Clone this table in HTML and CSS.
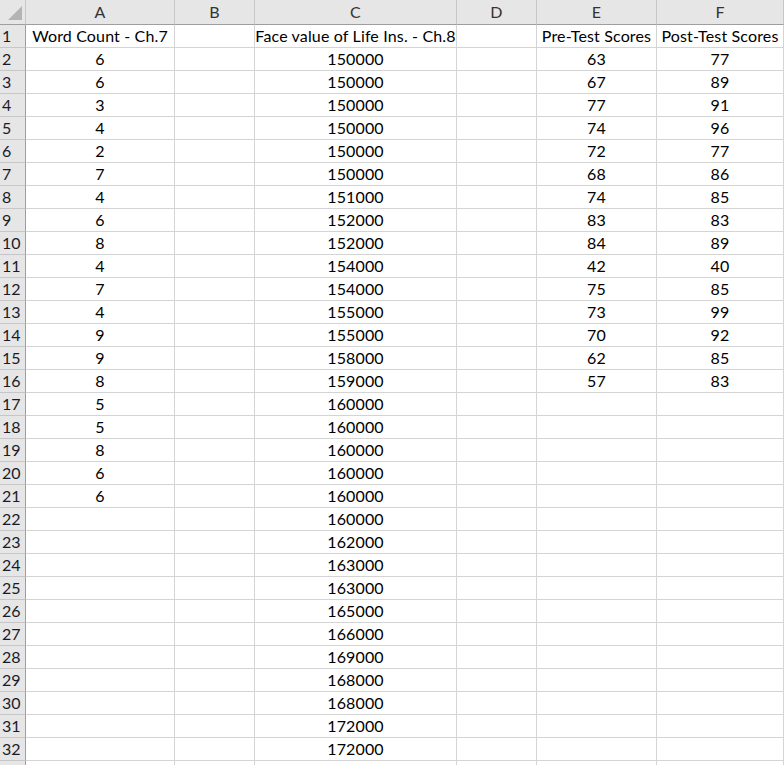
FILE: index.html
```html
<!DOCTYPE html>
<html>
<head>
<meta charset="utf-8">
<link rel="stylesheet" href="styles.css">
</head>
<body>
<div class="sheet">
  <div class="row hdr">
    <div class="c rh corner"><span class="tri"></span></div>
    <div class="c a">A</div><div class="c b">B</div><div class="c cc">C</div><div class="c d">D</div><div class="c e">E</div><div class="c f">F</div>
  </div>
  <div class="row"><div class="c rh">1</div><div class="c a">Word Count - Ch.7</div><div class="c b"></div><div class="c cc">Face value of Life Ins. - Ch.8</div><div class="c d"></div><div class="c e">Pre-Test Scores</div><div class="c f">Post-Test Scores</div></div>
  <div class="row"><div class="c rh">2</div><div class="c a">6</div><div class="c b"></div><div class="c cc">150000</div><div class="c d"></div><div class="c e">63</div><div class="c f">77</div></div>
  <div class="row"><div class="c rh">3</div><div class="c a">6</div><div class="c b"></div><div class="c cc">150000</div><div class="c d"></div><div class="c e">67</div><div class="c f">89</div></div>
  <div class="row"><div class="c rh">4</div><div class="c a">3</div><div class="c b"></div><div class="c cc">150000</div><div class="c d"></div><div class="c e">77</div><div class="c f">91</div></div>
  <div class="row"><div class="c rh">5</div><div class="c a">4</div><div class="c b"></div><div class="c cc">150000</div><div class="c d"></div><div class="c e">74</div><div class="c f">96</div></div>
  <div class="row"><div class="c rh">6</div><div class="c a">2</div><div class="c b"></div><div class="c cc">150000</div><div class="c d"></div><div class="c e">72</div><div class="c f">77</div></div>
  <div class="row"><div class="c rh">7</div><div class="c a">7</div><div class="c b"></div><div class="c cc">150000</div><div class="c d"></div><div class="c e">68</div><div class="c f">86</div></div>
  <div class="row"><div class="c rh">8</div><div class="c a">4</div><div class="c b"></div><div class="c cc">151000</div><div class="c d"></div><div class="c e">74</div><div class="c f">85</div></div>
  <div class="row"><div class="c rh">9</div><div class="c a">6</div><div class="c b"></div><div class="c cc">152000</div><div class="c d"></div><div class="c e">83</div><div class="c f">83</div></div>
  <div class="row"><div class="c rh">10</div><div class="c a">8</div><div class="c b"></div><div class="c cc">152000</div><div class="c d"></div><div class="c e">84</div><div class="c f">89</div></div>
  <div class="row"><div class="c rh">11</div><div class="c a">4</div><div class="c b"></div><div class="c cc">154000</div><div class="c d"></div><div class="c e">42</div><div class="c f">40</div></div>
  <div class="row"><div class="c rh">12</div><div class="c a">7</div><div class="c b"></div><div class="c cc">154000</div><div class="c d"></div><div class="c e">75</div><div class="c f">85</div></div>
  <div class="row"><div class="c rh">13</div><div class="c a">4</div><div class="c b"></div><div class="c cc">155000</div><div class="c d"></div><div class="c e">73</div><div class="c f">99</div></div>
  <div class="row"><div class="c rh">14</div><div class="c a">9</div><div class="c b"></div><div class="c cc">155000</div><div class="c d"></div><div class="c e">70</div><div class="c f">92</div></div>
  <div class="row"><div class="c rh">15</div><div class="c a">9</div><div class="c b"></div><div class="c cc">158000</div><div class="c d"></div><div class="c e">62</div><div class="c f">85</div></div>
  <div class="row"><div class="c rh">16</div><div class="c a">8</div><div class="c b"></div><div class="c cc">159000</div><div class="c d"></div><div class="c e">57</div><div class="c f">83</div></div>
  <div class="row"><div class="c rh">17</div><div class="c a">5</div><div class="c b"></div><div class="c cc">160000</div><div class="c d"></div><div class="c e"></div><div class="c f"></div></div>
  <div class="row"><div class="c rh">18</div><div class="c a">5</div><div class="c b"></div><div class="c cc">160000</div><div class="c d"></div><div class="c e"></div><div class="c f"></div></div>
  <div class="row"><div class="c rh">19</div><div class="c a">8</div><div class="c b"></div><div class="c cc">160000</div><div class="c d"></div><div class="c e"></div><div class="c f"></div></div>
  <div class="row"><div class="c rh">20</div><div class="c a">6</div><div class="c b"></div><div class="c cc">160000</div><div class="c d"></div><div class="c e"></div><div class="c f"></div></div>
  <div class="row"><div class="c rh">21</div><div class="c a">6</div><div class="c b"></div><div class="c cc">160000</div><div class="c d"></div><div class="c e"></div><div class="c f"></div></div>
  <div class="row"><div class="c rh">22</div><div class="c a"></div><div class="c b"></div><div class="c cc">160000</div><div class="c d"></div><div class="c e"></div><div class="c f"></div></div>
  <div class="row"><div class="c rh">23</div><div class="c a"></div><div class="c b"></div><div class="c cc">162000</div><div class="c d"></div><div class="c e"></div><div class="c f"></div></div>
  <div class="row"><div class="c rh">24</div><div class="c a"></div><div class="c b"></div><div class="c cc">163000</div><div class="c d"></div><div class="c e"></div><div class="c f"></div></div>
  <div class="row"><div class="c rh">25</div><div class="c a"></div><div class="c b"></div><div class="c cc">163000</div><div class="c d"></div><div class="c e"></div><div class="c f"></div></div>
  <div class="row"><div class="c rh">26</div><div class="c a"></div><div class="c b"></div><div class="c cc">165000</div><div class="c d"></div><div class="c e"></div><div class="c f"></div></div>
  <div class="row"><div class="c rh">27</div><div class="c a"></div><div class="c b"></div><div class="c cc">166000</div><div class="c d"></div><div class="c e"></div><div class="c f"></div></div>
  <div class="row"><div class="c rh">28</div><div class="c a"></div><div class="c b"></div><div class="c cc">169000</div><div class="c d"></div><div class="c e"></div><div class="c f"></div></div>
  <div class="row"><div class="c rh">29</div><div class="c a"></div><div class="c b"></div><div class="c cc">168000</div><div class="c d"></div><div class="c e"></div><div class="c f"></div></div>
  <div class="row"><div class="c rh">30</div><div class="c a"></div><div class="c b"></div><div class="c cc">168000</div><div class="c d"></div><div class="c e"></div><div class="c f"></div></div>
  <div class="row"><div class="c rh">31</div><div class="c a"></div><div class="c b"></div><div class="c cc">172000</div><div class="c d"></div><div class="c e"></div><div class="c f"></div></div>
  <div class="row"><div class="c rh">32</div><div class="c a"></div><div class="c b"></div><div class="c cc">172000</div><div class="c d"></div><div class="c e"></div><div class="c f"></div></div>
  <div class="row"><div class="c rh"></div><div class="c a"></div><div class="c b"></div><div class="c cc"></div><div class="c d"></div><div class="c e"></div><div class="c f"></div></div>
</div>
</body>
</html>
```

FILE: styles.css
```css
html, body {
  margin: 0;
  padding: 0;
  background: #ffffff;
  overflow: hidden;
}
.sheet {
  width: 784px;
  height: 765px;
  overflow: hidden;
  font-family: Lato, "Liberation Sans", sans-serif;
  font-size: 16px;
  letter-spacing: 0.15px;
  color: #000;
}
.row {
  display: flex;
  height: 23px;
}
.c {
  box-sizing: border-box;
  flex: none;
  height: 100%;
  border-right: 1px solid #d4d4d4;
  border-bottom: 1px solid #d4d4d4;
  display: flex;
  align-items: center;
  justify-content: center;
  white-space: nowrap;
  padding-bottom: 1px;
}
.rh {
  width: 26px;
  background: #e6e6e6;
  border-right-color: #9e9e9e;
  border-bottom-color: #c6c6c6;
  justify-content: flex-start;
  padding-left: 2px;
  color: #1a1a2a;
  letter-spacing: 0;
}
.a { width: 149px; }
.b { width: 80px; }
.cc { width: 202px; }
.d { width: 80px; }
.e { width: 120px; }
.f { width: 127px; }

.hdr { height: 25px; }
.hdr .c {
  background: #e6e6e6;
  border-right-color: #c6c6c6;
  border-bottom-color: #9e9e9e;
  color: #333;
  padding-bottom: 2px;
}
.hdr .rh { border-right-color: #c6c6c6; }
.corner { position: relative; }
.tri {
  position: absolute;
  right: 3px;
  bottom: 4px;
  width: 0;
  height: 0;
  border-left: 14px solid transparent;
  border-bottom: 14px solid #b4b4b4;
}
```
